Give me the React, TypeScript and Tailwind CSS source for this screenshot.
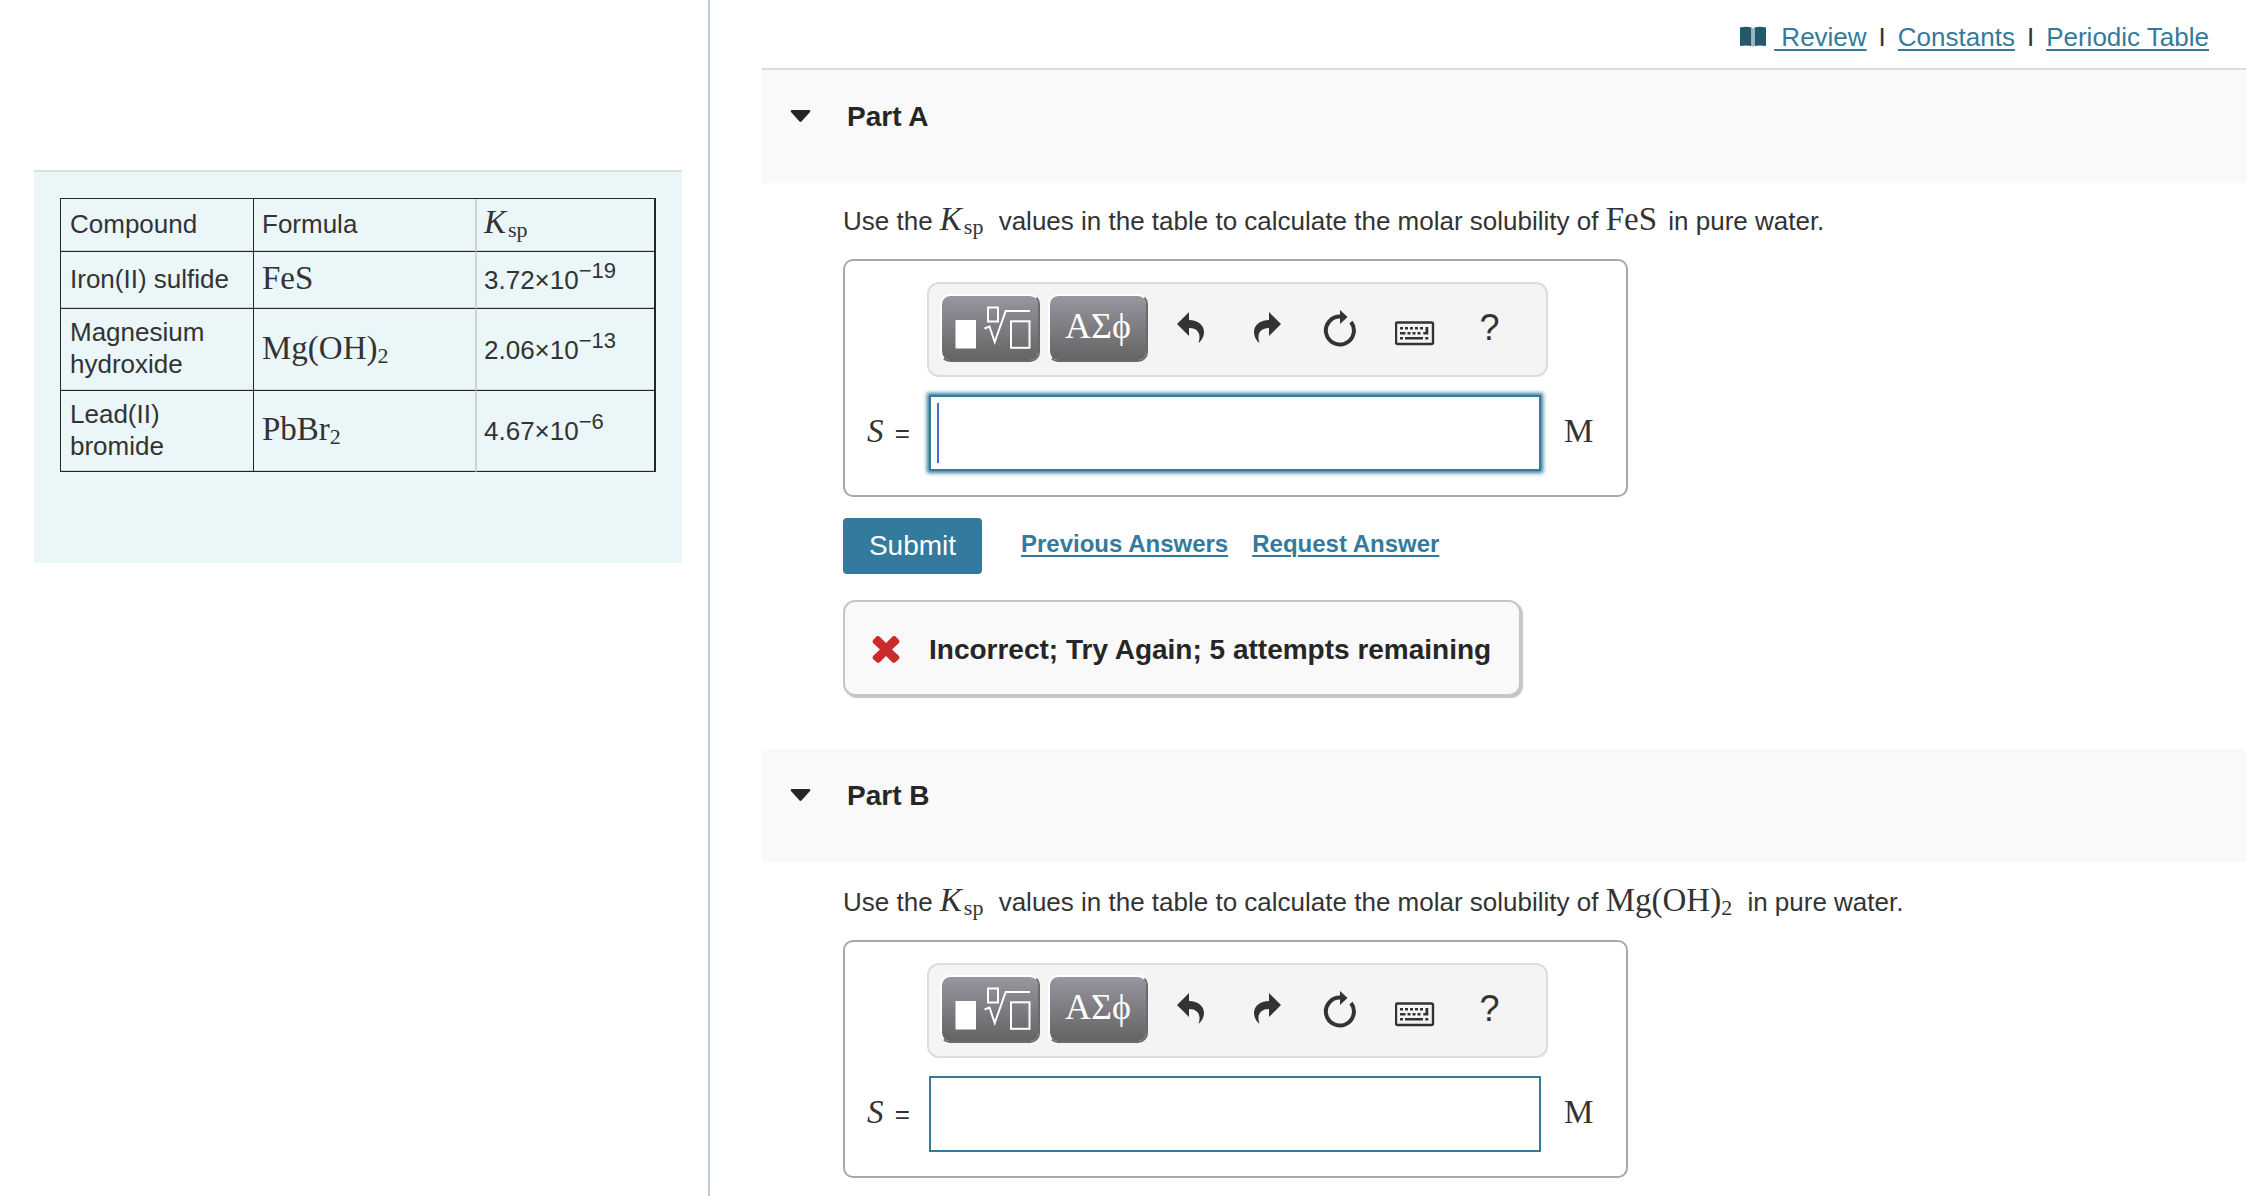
import { useState } from 'react';
import type { ReactNode } from 'react';

const Math = ({ children, italic = false }: { children: ReactNode; italic?: boolean }) => (
    <span className={italic ? 'font-["Liberation_Serif",serif] text-[33px] leading-none italic' : 'font-["Liberation_Serif",serif] text-[33px] leading-none'}>
        {children}
    </span>
);

const Sub = ({ children }: { children: ReactNode }) => <sub className="-bottom-1 text-[22px] not-italic">{children}</sub>;

const Ksp = () => (
    <Math>
        <i className="mr-0.5">K</i>
        <Sub>sp</Sub>
    </Math>
);

const MgOH2 = () => (
    <Math>
        Mg(OH)<Sub>2</Sub>
    </Math>
);

const PbBr2 = () => (
    <Math>
        PbBr<Sub>2</Sub>
    </Math>
);

const compounds = [
    { name: 'Iron(II) sulfide', formula: <Math>FeS</Math>, base: '3.72', exponent: '−19', height: 'h-[57px]' },
    { name: 'Magnesium hydroxide', formula: <MgOH2 />, base: '2.06', exponent: '−13', height: 'h-[82px]' },
    { name: 'Lead(II) bromide', formula: <PbBr2 />, base: '4.67', exponent: '−6', height: 'h-[81px]' },
];

const cell = 'border-b border-b-[#262626] p-0 text-left font-normal shadow-[inset_0_-1px_0_#d0d3d2]';
const firstCell = `${cell} border-r border-r-[#262626] pb-[3px] pl-[9px]`;
const secondCell = `${cell} border-r-2 border-r-[#cfd3d3] pb-0.5 pl-2`;
const thirdCell = `${cell} pl-[7px]`;

function CompoundTable() {
    return (
        <table className="w-full table-fixed border-separate border-spacing-0 border-t border-r-2 border-l border-[#262626]">
            <thead>
                <tr className="h-[53px]">
                    <th className={`${firstCell} w-[193px]`}>Compound</th>
                    <th className={`${secondCell} w-[223px]`}>Formula</th>
                    <th className={`${thirdCell} pb-1`}><Ksp /></th>
                </tr>
            </thead>
            <tbody>
                {compounds.map((c) => (
                    <tr key={c.name} className={c.height}>
                        <td className={firstCell}>{c.name}</td>
                        <td className={secondCell}>{c.formula}</td>
                        <td className={thirdCell}>
                            {c.base}×10<sup className="text-[22px]">{c.exponent}</sup>
                        </td>
                    </tr>
                ))}
            </tbody>
        </table>
    );
}

function BookIcon() {
    return (
        <svg width="26" height="22" viewBox="0 0 26 22" fill="#24586c" aria-hidden="true">
            <path d="M0 1.500C4 .6 8 .6 11.500 1.500V20C8 19.200 4 19.200 0 20Z" />
            <path d="M14.500 1.500C18 .6 22 .6 26 1.500V20C22 19.200 18 19.200 14.500 20Z" />
            <path d="M11.500 1.500L13 2.500L14.500 1.500V20L13 21L11.500 20Z" fill="#9db7c0" />
        </svg>
    );
}

function TemplatesIcon() {
    return (
        <svg width="96" height="64" viewBox="2 2 96 64" fill="none" stroke="white" strokeWidth="2" aria-hidden="true">
            <rect x="15.500" y="26" width="20.500" height="28.500" fill="white" stroke="none" />
            <rect x="48" y="13.500" width="10" height="14" />
            <path d="M44.500 34.500L49.500 32.500L54.700 48L65.700 17H90" />
            <rect x="71" y="27.300" width="18.500" height="26.500" />
        </svg>
    );
}

const undoPath = 'M7 16L19 4V12C28 12 34 17 34 24C34 29 31 33 28.500 35C31.500 26 28 20 19 20V28Z';

function UndoIcon() {
    return (
        <svg width="40" height="40" viewBox="0 0 40 40" fill="#333" aria-hidden="true">
            <path d={undoPath} />
        </svg>
    );
}

function RedoIcon() {
    return (
        <svg width="40" height="40" viewBox="0 0 40 40" fill="#333" aria-hidden="true">
            <path d={undoPath} transform="translate(43 0) scale(-1 1)" />
        </svg>
    );
}

function ResetIcon() {
    return (
        <svg width="40" height="40" viewBox="0 0 40 40" aria-hidden="true">
            <path d="M20 8.500A14 14 0 1 0 31 14" fill="none" stroke="#333" strokeWidth="4" />
            <path d="M20 2L27.500 9L20 16Z" fill="#333" />
        </svg>
    );
}

function KeyboardIcon() {
    return (
        <svg width="40" height="40" viewBox="0 0 40 40" fill="#333" aria-hidden="true">
            <rect x="1" y="14.500" width="37" height="21.500" rx="1.500" fill="none" stroke="#333" strokeWidth="2.400" />
            <path d="M5 19h3v2.500h-3zM10 19h3v2.500h-3zM15 19h3v2.500h-3zM20 19h3v2.500h-3zM25 19h3v2.500h-3z" />
            <path d="M30.500 19h2.800v7.500h-5v-2.500h2.200z" />
            <path d="M5 24h5.500v2.500h-5.500zM12.500 24h3v2.500h-3zM17.500 24h3v2.500h-3zM22.500 24h3v2.500h-3z" />
            <path d="M5 29h3v2.500h-3zM10 29h18v2.500h-18zM30.300 29h3v2.500h-3z" />
        </svg>
    );
}

const darkButton =
    'flex h-[68px] w-[100px] items-center justify-center rounded-[10px] border-2 border-t-white border-r-[#6a6a6a] border-b-[#6a6a6a] border-l-white bg-linear-to-b from-[#98969f] to-[#646464] bg-clip-padding text-white';
const iconButton = 'flex h-[68px] w-[75px] items-center justify-center text-[#333]';

interface AnswerBoxProps {
    id: string;
    focused?: boolean;
}

function AnswerBox({ id, focused = false }: AnswerBoxProps) {
    const [value, setValue] = useState('');

    return (
        <div className="w-[785px] rounded-[10px] border-2 border-[#a8a8a8] pt-[21px] pb-6">
            <div role="toolbar" className="ml-[82px] flex w-[621px] rounded-xl border-2 border-[#dcdcdc] bg-[#f4f4f4] pt-2.5 pb-[13px] pl-[11px]">
                <button type="button" aria-label="Templates" className={darkButton}>
                    <TemplatesIcon />
                </button>
                <button type="button" aria-label="Symbols" className={`${darkButton} mr-1 ml-2 pb-1 font-["Liberation_Serif","DejaVu_Serif",serif] text-[36px] leading-none`}>
                    ΑΣϕ
                </button>
                <button type="button" aria-label="Undo" className={iconButton}><UndoIcon /></button>
                <button type="button" aria-label="Redo" className={iconButton}><RedoIcon /></button>
                <button type="button" aria-label="Reset" className={iconButton}><ResetIcon /></button>
                <button type="button" aria-label="Keyboard shortcuts" className={iconButton}><KeyboardIcon /></button>
                <button type="button" aria-label="Help" className={`${iconButton} text-[36px]`}>?</button>
            </div>
            <div className="mt-[18px] flex items-center">
                <label htmlFor={id} className="w-[84px] pb-0.5 pl-[22px] whitespace-nowrap">
                    <Math italic>S</Math> <span className="ml-1">=</span>
                </label>
                <div className="relative w-[612px]">
                    <input
                        id={id}
                        value={value}
                        onChange={(e) => setValue(e.target.value)}
                        className={
                            focused
                                ? 'block h-[76px] w-full border-2 border-[#347a9c] px-2 shadow-[0_0_4px_2px_#347a9c] outline-none'
                                : 'block h-[76px] w-full border-2 border-[#347a9c] px-2 outline-none'
                        }
                    />
                    {focused && <span className="absolute top-2 left-2 h-[60px] w-0.5 bg-[#3f6bd5]" />}
                </div>
                <span className="ml-[23px] pb-0.5"><Math>M</Math></span>
            </div>
        </div>
    );
}

interface PartProps {
    title: string;
    compound: ReactNode;
    bodyClass: string;
    children: ReactNode;
}

function Part({ title, compound, bodyClass, children }: PartProps) {
    return (
        <section>
            <h2 className="h-[113px] bg-[#f9f9f9] pt-[31px] pl-7 text-[28px] leading-8 font-bold text-[#262626]">
                <button type="button" aria-expanded="true" className="flex items-center">
                    <svg width="22" height="14" viewBox="0 0 22 14" fill="#262626" aria-hidden="true">
                        <path d="M1.500 0H19.500Q21 .5 20 2L11.500 11.500Q10.500 12.300 9.500 11.500L1 2Q0 .5 1.500 0Z" />
                    </svg>
                    <span className="ml-[35px]">{title}</span>
                </button>
            </h2>
            <div className={bodyClass}>
                <p className="mb-[18px] leading-10">
                    Use the <Ksp /> <span className="ml-2">values in the table to calculate the molar solubility of</span> {compound}{' '}
                    <span className="ml-1">in pure water.</span>
                </p>
                {children}
            </div>
        </section>
    );
}

const link = 'text-[#347a9c] underline decoration-2 underline-offset-3';

export default function App() {
    return (
        <div className='flex min-h-screen bg-white font-["Liberation_Sans",Arial,sans-serif] text-[26px] leading-8 text-[#333]'>
            <aside className="w-[710px] shrink-0 border-r-2 border-[#bccbdf] pt-[170px] pr-[26px] pl-[34px]">
                <div className="border-t-2 border-[#dadfdf] bg-[#eaf6f8] px-[26px] pt-[26px] pb-[91px]">
                    <CompoundTable />
                </div>
            </aside>
            <main className="min-w-0 flex-1 pl-[52px]">
                <nav className="flex h-[68px] items-center justify-end pt-1.5 pr-[37px]">
                    <BookIcon />
                    <a href="#review" className={`${link} ml-2 whitespace-pre`}> Review</a>
                    <span className="mx-3">I</span>
                    <a href="#constants" className={link}>Constants</a>
                    <span className="mx-3">I</span>
                    <a href="#periodic-table" className={link}>Periodic Table</a>
                </nav>
                <div className="border-t-2 border-[#dddddd]">
                    <Part title="Part A" compound={<Math>FeS</Math>} bodyClass="pt-[18px] pl-[81px]">
                        <AnswerBox id="answer-a" focused />
                        <div className="mt-[21px] flex items-center">
                            <button type="button" className="h-14 w-[139px] rounded bg-[#347a9c] text-[28px] text-white">
                                Submit
                            </button>
                            <a href="#previous" className={`${link} ml-[39px] pb-1 text-2xl font-bold`}>Previous Answers</a>
                            <a href="#request" className={`${link} ml-6 pb-1 text-2xl font-bold`}>Request Answer</a>
                        </div>
                        <div className="mt-[26px] mb-[53px] flex h-[96px] w-[678px] items-center rounded-xl border-2 border-[#c6c6c6] bg-[#f9f9f9] pt-1 pl-[26px] shadow-[2px_2px_1px_#c6c6c6]">
                            <svg width="30" height="30" viewBox="0 0 30 30" fill="#cb2a2d" aria-hidden="true">
                                <path d="M6 1Q7.500 .5 9 2L15 8L21 2Q22.500 .5 24 1L28 5Q29 6.500 28 8L21 14.500L28 21Q29 22.500 28 24L24 27.500Q22.500 28.500 21 27L15 21L9 27Q7.500 28.500 6 27.500L2 24Q1 22.500 2 21L9 14.500L2 8Q1 6.500 2 5Z" />
                            </svg>
                            <strong className="ml-7 text-[28px] text-[#262626]">Incorrect; Try Again; 5 attempts remaining</strong>
                        </div>
                    </Part>
                    <Part title="Part B" compound={<span className="mr-1"><MgOH2 /></span>} bodyClass="pt-5 pl-[81px]">
                        <AnswerBox id="answer-b" />
                    </Part>
                </div>
            </main>
        </div>
    );
}
